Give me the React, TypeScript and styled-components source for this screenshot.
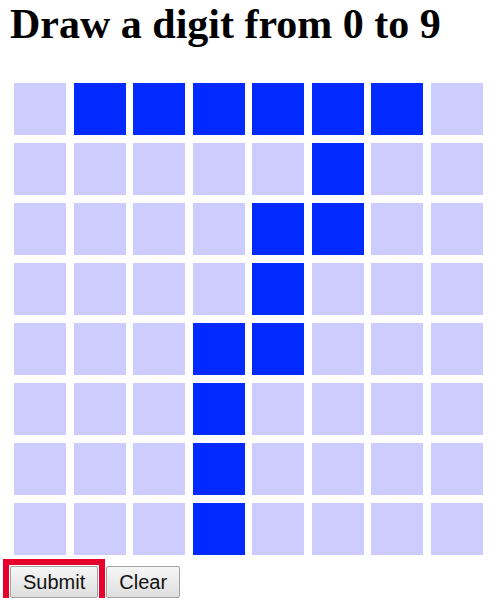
import React, { useState } from "react";
import styled, { createGlobalStyle } from "styled-components";

const GlobalStyle = createGlobalStyle`
  html, body {
    margin: 0;
    padding: 0;
    background: #ffffff;
  }
`;

const Page = styled.div`
  padding: 0 10px;
  font-family: "Liberation Serif", "Times New Roman", serif;
`;

const Title = styled.h1`
  margin: 0 0 35px;
  font-family: "Liberation Serif", "Times New Roman", serif;
  font-size: 42px;
  font-weight: bold;
  line-height: normal;
  color: #000;
`;

const Board = styled.div`
  display: grid;
  grid-template-columns: repeat(8, 52px);
  grid-auto-rows: 52px;
  column-gap: 7.5px;
  row-gap: 8px;
  margin-left: 4px;
`;

const Cell = styled.div<{ $on: boolean }>`
  background: ${(p) => (p.$on ? "#002aff" : "#ccccff")};
  cursor: pointer;
`;

const Controls = styled.div`
  display: flex;
  gap: 8px;
  margin-top: 11px;
`;

const Button = styled.button<{ $focused?: boolean }>`
  position: relative;
  height: 32px;
  padding: 0 12px;
  font-family: "Liberation Sans", Arial, sans-serif;
  font-size: 20px;
  color: #111;
  background: linear-gradient(#f6f6f6, #dedede);
  border: 1px solid #a3a3a3;
  border-radius: 2px;
  outline: none;
  cursor: pointer;

  &::after {
    content: "";
    display: ${(p) => (p.$focused ? "block" : "none")};
    position: absolute;
    inset: -8px;
    border: 6px solid #e8002d;
    pointer-events: none;
  }
`;

const initial = [
  [0, 1, 1, 1, 1, 1, 1, 0],
  [0, 0, 0, 0, 0, 1, 0, 0],
  [0, 0, 0, 0, 1, 1, 0, 0],
  [0, 0, 0, 0, 1, 0, 0, 0],
  [0, 0, 0, 1, 1, 0, 0, 0],
  [0, 0, 0, 1, 0, 0, 0, 0],
  [0, 0, 0, 1, 0, 0, 0, 0],
  [0, 0, 0, 1, 0, 0, 0, 0],
];

export default function App() {
  const [grid, setGrid] = useState<number[][]>(initial);

  const toggle = (r: number, c: number) => {
    setGrid((g) =>
      g.map((row, ri) =>
        ri === r ? row.map((v, ci) => (ci === c ? 1 - v : v)) : row
      )
    );
  };

  return (
    <>
      <GlobalStyle />
      <Page>
        <Title>Draw a digit from 0 to 9</Title>
        <Board>
          {grid.map((row, r) =>
            row.map((v, c) => (
              <Cell key={`${r}-${c}`} $on={v === 1} onClick={() => toggle(r, c)} />
            ))
          )}
        </Board>
        <Controls>
          <Button $focused>Submit</Button>
          <Button onClick={() => setGrid(initial.map((row) => row.map(() => 0)))}>
            Clear
          </Button>
        </Controls>
      </Page>
    </>
  );
}
